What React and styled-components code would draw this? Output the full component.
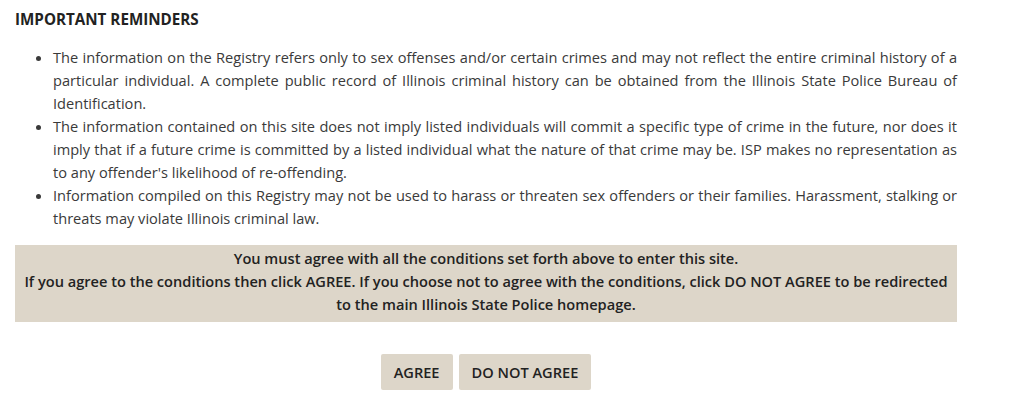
import React from "react";
import styled, { createGlobalStyle } from "styled-components";

const GlobalStyle = createGlobalStyle`
  body {
    margin: 0;
    background: #ffffff;
    font-family: "Open Sans", "Noto Sans", sans-serif;
    color: #333333;
  }
`;

const reminders = [
  "The information on the Registry refers only to sex offenses and/or certain crimes and may not reflect the entire criminal history of a particular individual. A complete public record of Illinois criminal history can be obtained from the Illinois State Police Bureau of Identification.",
  "The information contained on this site does not imply listed individuals will commit a specific type of crime in the future, nor does it imply that if a future crime is committed by a listed individual what the nature of that crime may be. ISP makes no representation as to any offender's likelihood of re-offending.",
  "Information compiled on this Registry may not be used to harass or threaten sex offenders or their families. Harassment, stalking or threats may violate Illinois criminal law.",
];

const App = () => {
  return (
    <>
      <GlobalStyle />
      <Page>
        <Heading>IMPORTANT REMINDERS</Heading>
        <List>
          {reminders.map((item, i) => (
            <Item key={i}>{item}</Item>
          ))}
        </List>
        <Notice>
          You must agree with all the conditions set forth above to enter this site.
          <br />
          If you agree to the conditions then click AGREE. If you choose not to agree with the conditions, click DO NOT AGREE to be redirected to the main Illinois State Police homepage.
        </Notice>
        <Buttons>
          <Button>AGREE</Button>
          <Button>DO NOT AGREE</Button>
        </Buttons>
      </Page>
    </>
  );
};

const Page = styled.div`
  width: 942px;
  margin-left: 15px;
  padding-top: 9px;
`;

const Heading = styled.h2`
  margin: 0;
  font-size: 15.2px;
  font-weight: 700;
  color: #222222;
  line-height: 20px;
`;

const List = styled.ul`
  margin: 17px 0 0 0;
  padding-left: 38px;
  font-size: 14.6px;
  line-height: 23px;
  text-align: justify;
  color: #3a3a3a;
`;

const Item = styled.li`
  padding-left: 0;
`;

const Notice = styled.div`
  margin-top: 15px;
  background: #ddd6c9;
  padding: 2px 8px 6px;
  text-align: center;
  font-size: 14.6px;
  font-weight: 600;
  line-height: 23px;
  color: #222222;
`;

const Buttons = styled.div`
  display: flex;
  justify-content: center;
  gap: 6px;
  margin-top: 32px;
`;

const Button = styled.button`
  background: #ddd6c9;
  border: none;
  border-radius: 2px;
  height: 36px;
  padding: 0 13px;
  font-family: "Open Sans", "Noto Sans", sans-serif;
  font-size: 14.6px;
  font-weight: 600;
  color: #222222;
  cursor: pointer;
`;

export default App;
